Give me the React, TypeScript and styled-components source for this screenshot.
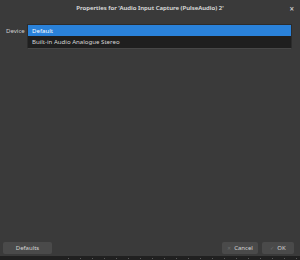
import styled, { createGlobalStyle } from 'styled-components';

const GlobalStyle = createGlobalStyle`
  html, body {
    margin: 0;
    padding: 0;
    background: #3a3a3a;
  }
  * {
    box-sizing: border-box;
  }
`;

const Dialog = styled.div`
  width: 300px;
  height: 260px;
  display: flex;
  flex-direction: column;
  background: #3a3a3a;
  color: #d4d4d4;
  font-family: 'Noto Sans', 'Open Sans', sans-serif;
  font-size: 6.1px;
  overflow: hidden;
`;

const TitleBar = styled.div`
  position: relative;
  height: 15px;
  display: flex;
  align-items: center;
  justify-content: center;
  font-weight: 600;
  font-size: 6px;
  color: #e0e0e0;
`;

const CloseButton = styled.span`
  position: absolute;
  right: 6px;
  top: 3px;
  font-size: 8px;
  color: #c8c8c8;
`;

const Body = styled.div`
  flex: 1;
  display: flex;
  flex-direction: column;
  padding: 9px 8px 0 6px;
`;

const FieldRow = styled.div`
  display: flex;
  align-items: flex-start;
  gap: 2px;
`;

const Label = styled.label`
  width: 19px;
  padding-top: 2px;
  white-space: nowrap;
  color: #cfcfcf;
`;

const List = styled.div`
  flex: 1;
  display: flex;
  flex-direction: column;
  background: #1f1f1f;
  border: 1px solid #2c2c2c;
  border-bottom: 1px solid #474747;
  padding-bottom: 1px;
`;

const ListItem = styled.div<{ $selected?: boolean }>`
  height: 11px;
  display: flex;
  align-items: center;
  padding-left: 4px;
  background: ${(p) => (p.$selected ? '#2a82da' : 'transparent')};
  color: ${(p) => (p.$selected ? '#ffffff' : '#d8d8d8')};
`;

const Footer = styled.div`
  display: flex;
  align-items: center;
  padding: 0 6px 2px 3px;
  gap: 4px;
`;

const Spacer = styled.div`
  flex: 1;
`;

const Button = styled.button<{ $width: number }>`
  width: ${(p) => p.$width}px;
  height: 12px;
  display: flex;
  align-items: center;
  justify-content: center;
  gap: 3px;
  background: #4a4a4a;
  border: none;
  border-radius: 2px;
  color: #d4d4d4;
  font-family: inherit;
  font-size: 6px;
  padding: 0;
`;

const ButtonIcon = styled.span`
  color: #6c6c6c;
  font-size: 5px;
`;

const Grip = styled.div`
  height: 4px;
  background: #202020;
  display: flex;
  align-items: center;
  padding-left: 68px;
  gap: 11px;
`;

const GripDot = styled.span`
  width: 1px;
  height: 1px;
  background: #5a5a5a;
`;

export default function App() {
  const items = ['Default', 'Built-in Audio Analogue Stereo'];
  return (
    <>
      <GlobalStyle />
      <Dialog>
        <TitleBar>
          Properties for 'Audio Input Capture (PulseAudio) 2'
          <CloseButton>×</CloseButton>
        </TitleBar>
        <Body>
          <FieldRow>
            <Label>Device</Label>
            <List>
              {items.map((item, i) => (
                <ListItem key={item} $selected={i === 0}>
                  {item}
                </ListItem>
              ))}
            </List>
          </FieldRow>
        </Body>
        <Footer>
          <Button $width={49}>Defaults</Button>
          <Spacer />
          <Button $width={36}>
            <ButtonIcon>✕</ButtonIcon>Cancel
          </Button>
          <Button $width={32}>
            <ButtonIcon>✓</ButtonIcon>OK
          </Button>
        </Footer>
        <Grip>
          {Array.from({ length: 20 }).map((_, i) => (
            <GripDot key={i} />
          ))}
        </Grip>
      </Dialog>
    </>
  );
}
